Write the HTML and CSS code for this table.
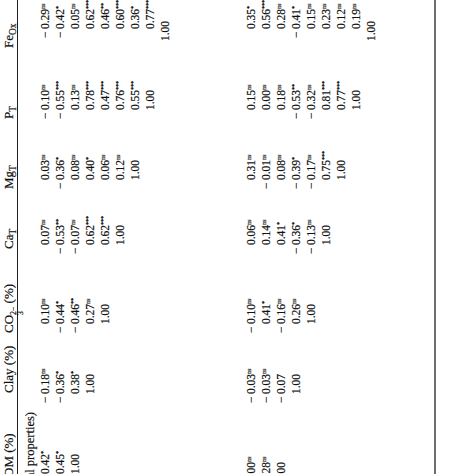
FILE: index.html
```html
<!DOCTYPE html>
<html>
<head>
<meta charset="utf-8">
<link rel="stylesheet" href="styles.css">
</head>
<body>
<div class="stage">
  <div class="tbl">
    <div class="row hdr">
      <div></div>
      <div class="h h-om">OM (%)</div>
      <div class="h h-clay">Clay (%)</div>
      <div class="h">CO<span class="ss"><span class="ssu">2−</span><span class="ssd">3</span></span> (%)</div>
      <div class="h h-ca">Ca<sub>T</sub></div>
      <div class="h">Mg<sub>T</sub></div>
      <div class="h">P<sub>T</sub></div>
      <div class="h h-fe">Fe<sub>Ox</sub></div>
    </div>

    <div class="row sec"><div class="lab">(a) Topsoil (physical and chemical properties)</div></div>
    <div class="row"><div></div><div class="v">0.42<sup>*</sup></div><div class="v"><span class="m">−</span>0.18<sup>ns</sup></div><div class="v">0.10<sup>ns</sup></div><div class="v">0.07<sup>ns</sup></div><div class="v">0.03<sup>ns</sup></div><div class="v"><span class="m">−</span>0.10<sup>ns</sup></div><div class="v"><span class="m">−</span>0.29<sup>ns</sup></div></div>
    <div class="row"><div></div><div class="v">0.45<sup>*</sup></div><div class="v"><span class="m">−</span>0.36<sup>*</sup></div><div class="v"><span class="m">−</span>0.44<sup>*</sup></div><div class="v"><span class="m">−</span>0.53<sup>**</sup></div><div class="v"><span class="m">−</span>0.36<sup>*</sup></div><div class="v"><span class="m">−</span>0.55<sup>***</sup></div><div class="v"><span class="m">−</span>0.42<sup>*</sup></div></div>
    <div class="row"><div></div><div class="v">1.00</div><div class="v">0.38<sup>*</sup></div><div class="v"><span class="m">−</span>0.46<sup>**</sup></div><div class="v"><span class="m">−</span>0.07<sup>ns</sup></div><div class="v">0.08<sup>ns</sup></div><div class="v">0.13<sup>ns</sup></div><div class="v">0.05<sup>ns</sup></div></div>
    <div class="row"><div></div><div></div><div class="v">1.00</div><div class="v">0.27<sup>ns</sup></div><div class="v">0.62<sup>***</sup></div><div class="v">0.40<sup>*</sup></div><div class="v">0.78<sup>***</sup></div><div class="v">0.62<sup>***</sup></div></div>
    <div class="row"><div></div><div></div><div></div><div class="v">1.00</div><div class="v">0.62<sup>***</sup></div><div class="v">0.06<sup>ns</sup></div><div class="v">0.47<sup>***</sup></div><div class="v">0.46<sup>**</sup></div></div>
    <div class="row"><div></div><div></div><div></div><div></div><div class="v">1.00</div><div class="v">0.12<sup>ns</sup></div><div class="v">0.76<sup>***</sup></div><div class="v">0.60<sup>***</sup></div></div>
    <div class="row"><div></div><div></div><div></div><div></div><div></div><div class="v">1.00</div><div class="v">0.55<sup>***</sup></div><div class="v">0.36<sup>*</sup></div></div>
    <div class="row"><div></div><div></div><div></div><div></div><div></div><div></div><div class="v">1.00</div><div class="v">0.77<sup>***</sup></div></div>
    <div class="row"><div></div><div></div><div></div><div></div><div></div><div></div><div></div><div class="v one">1.00</div></div>

    <div class="row sec2"></div>
    <div class="row"><div></div><div class="v om2">0.00<sup>ns</sup></div><div class="v"><span class="m">−</span>0.03<sup>ns</sup></div><div class="v"><span class="m">−</span>0.10<sup>ns</sup></div><div class="v">0.06<sup>ns</sup></div><div class="v">0.31<sup>ns</sup></div><div class="v">0.15<sup>ns</sup></div><div class="v">0.35<sup>*</sup></div></div>
    <div class="row"><div></div><div class="v om2">0.28<sup>ns</sup></div><div class="v"><span class="m">−</span>0.03<sup>ns</sup></div><div class="v">0.41<sup>*</sup></div><div class="v">0.14<sup>ns</sup></div><div class="v"><span class="m">−</span>0.01<sup>ns</sup></div><div class="v">0.00<sup>ns</sup></div><div class="v">0.56<sup>***</sup></div></div>
    <div class="row"><div></div><div class="v om2">1.00</div><div class="v"><span class="m">−</span>0.07</div><div class="v"><span class="m">−</span>0.16<sup>ns</sup></div><div class="v">0.41<sup>*</sup></div><div class="v">0.08<sup>ns</sup></div><div class="v">0.18<sup>ns</sup></div><div class="v">0.28<sup>ns</sup></div></div>
    <div class="row"><div></div><div></div><div class="v">1.00</div><div class="v">0.26<sup>ns</sup></div><div class="v"><span class="m">−</span>0.36<sup>*</sup></div><div class="v"><span class="m">−</span>0.39<sup>*</sup></div><div class="v"><span class="m">−</span>0.53<sup>**</sup></div><div class="v"><span class="m">−</span>0.41<sup>*</sup></div></div>
    <div class="row"><div></div><div></div><div></div><div class="v">1.00</div><div class="v"><span class="m">−</span>0.13<sup>ns</sup></div><div class="v"><span class="m">−</span>0.17<sup>ns</sup></div><div class="v"><span class="m">−</span>0.32<sup>ns</sup></div><div class="v">0.15<sup>ns</sup></div></div>
    <div class="row"><div></div><div></div><div></div><div></div><div class="v">1.00</div><div class="v">0.75<sup>***</sup></div><div class="v">0.81<sup>***</sup></div><div class="v">0.23<sup>ns</sup></div></div>
    <div class="row"><div></div><div></div><div></div><div></div><div></div><div class="v">1.00</div><div class="v">0.77<sup>***</sup></div><div class="v">0.12<sup>ns</sup></div></div>
    <div class="row"><div></div><div></div><div></div><div></div><div></div><div></div><div class="v">1.00</div><div class="v">0.19<sup>ns</sup></div></div>
    <div class="row"><div></div><div></div><div></div><div></div><div></div><div></div><div></div><div class="v one">1.00</div></div>

    <div class="rule"></div>
  </div>
</div>
</body>
</html>
```

FILE: styles.css
```css
html, body {
  margin: 0;
  padding: 0;
  background: #ffffff;
}

.stage {
  width: 474px;
  height: 474px;
  overflow: hidden;
}

.tbl {
  width: 520px;
  height: 474px;
  transform-origin: 0 0;
  transform: translate(0, 500px) rotate(-90deg);
  font-family: "Liberation Serif", "Times New Roman", serif;
  font-size: 11.5px;
  color: #111111;
  -webkit-text-stroke: 0.2px #111111;
}

.row {
  display: grid;
  grid-template-columns: 17px 80px 70px 79px 65px 70px 81px 58px;
  height: 15px;
  line-height: 15px;
  white-space: nowrap;
}

.hdr {
  height: 17px;
  line-height: 17px;
  border-bottom: 1px solid #1e1e1e;
  font-size: 13px;
}

.h-om {
  padding-left: 6px;
}

.h-clay {
  padding-left: 10px;
}

.h-ca {
  padding-left: 5px;
}

.h-fe {
  margin-left: -10px;
}

.sec {
  margin-top: 5px;
}

.sec2 {
  margin-top: 56px;
}

.lab {
  grid-column: 1 / 3;
  display: flex;
  justify-content: flex-end;
  padding-right: 9px;
  font-size: 12.5px;
}

.v {
  padding-left: 9px;
}

.v.one {
  padding-left: 0;
  margin-left: -3px;
}

.v.om2 {
  padding-left: 0;
  margin-left: 1px;
}

.m {
  display: inline-block;
  width: 9px;
  margin-left: -9px;
}

sup {
  font-size: 0.56em;
  line-height: 0;
  vertical-align: 0.6em;
  letter-spacing: -0.3px;
}

sub {
  font-size: 0.72em;
  line-height: 0;
  vertical-align: -0.3em;
}

.ss {
  display: inline-flex;
  flex-direction: column;
  font-size: 0.6em;
  line-height: 0.95;
  vertical-align: -0.35em;
}

.rule {
  margin-top: 55px;
  height: 2px;
  background: #6e6e6e;
}
```
